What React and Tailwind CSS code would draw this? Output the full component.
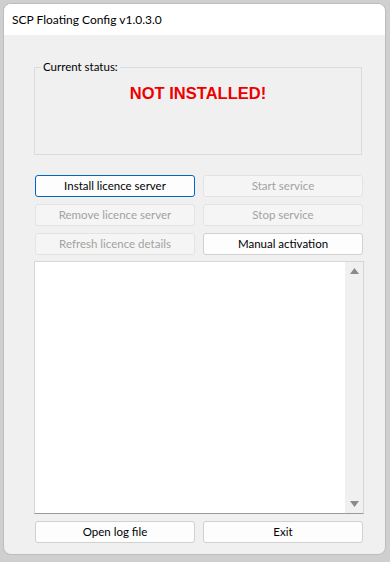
import React from 'react';

const font = { fontFamily: 'Lato, "Noto Sans", sans-serif' };

const WinButton = ({ children, disabled, focused }) => {
  let cls = 'h-[22px] flex-1 rounded-[3px] border text-[11.5px] leading-none flex items-center justify-center ';
  if (disabled) cls += 'border-[#e3e3e3] bg-[#f5f5f5] text-[#a2a2a2]';
  else if (focused) cls += 'border-[#0067c0] bg-[#fdfdfd] text-black';
  else cls += 'border-[#d0d0d0] bg-[#fdfdfd] text-black';
  return <div className={cls}>{children}</div>;
};

const App = () => {
  return (
    <div className="w-[390px] h-[562px] bg-[#cfcfcf] pt-[3px] pl-[3px] pr-[4px] pb-[7px]" style={font}>
      <div className="w-full h-full rounded-[8px] bg-[#f0f0f0] border border-[#bdbdbd] overflow-hidden flex flex-col">
        <div className="h-[31px] bg-white flex items-center pl-[8px] text-[12px] text-black shrink-0">
          SCP Floating Config v1.0.3.0
        </div>
        <div className="flex-1 flex flex-col pl-[30px] pr-[21px] pt-[32px] pb-[10px]">
          <div className="relative h-[88px] mr-[2px] border border-[#dcdcdc] flex justify-center">
            <span className="absolute -top-[9px] left-[6px] bg-[#f0f0f0] px-[2px] text-[11.5px] leading-[16px] text-black">
              Current status:
            </span>
            <span className="mt-[13px] text-[16.5px] font-bold text-[#ee0000]" style={{ fontFamily: '"Liberation Sans", Arial, sans-serif' }}>
              NOT INSTALLED!
            </span>
          </div>
          <div className="mt-[20px] flex flex-col gap-[7px]">
            <div className="flex gap-[8px] px-[1px]">
              <WinButton focused>Install licence server</WinButton>
              <WinButton disabled>Start service</WinButton>
            </div>
            <div className="flex gap-[8px] px-[1px]">
              <WinButton disabled>Remove licence server</WinButton>
              <WinButton disabled>Stop service</WinButton>
            </div>
            <div className="flex gap-[8px] px-[1px]">
              <WinButton disabled>Refresh licence details</WinButton>
              <WinButton>Manual activation</WinButton>
            </div>
          </div>
          <div className="mt-[6px] h-[253px] border border-[#d6d6d6] border-b-[#9a9a9a] bg-white flex justify-end">
            <div className="w-[18px] bg-[#f0f0f0] flex flex-col items-center justify-between py-[6px]">
              <svg width="9" height="6" viewBox="0 0 9 6"><path d="M4.5 0 L9 6 L0 6 Z" fill="#8a8a8a" /></svg>
              <svg width="9" height="6" viewBox="0 0 9 6"><path d="M0 0 L9 0 L4.5 6 Z" fill="#8a8a8a" /></svg>
            </div>
          </div>
          <div className="mt-[7px] flex gap-[8px] px-[1px]">
            <WinButton>Open log file</WinButton>
            <WinButton>Exit</WinButton>
          </div>
        </div>
      </div>
    </div>
  );
};

export default App;
